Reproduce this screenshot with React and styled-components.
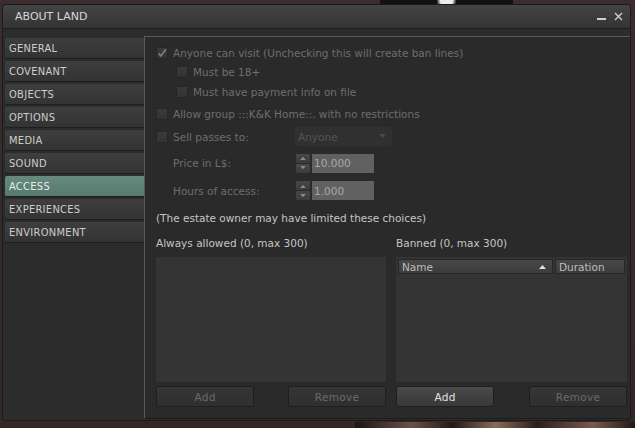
import React from "react";
import styled, { createGlobalStyle } from "styled-components";

const GlobalStyle = createGlobalStyle`
  html, body {
    margin: 0;
    padding: 0;
    background: #3a2c2c;
  }
  body {
    font-family: "DejaVu Sans", "Liberation Sans", sans-serif;
  }
`;

const Desktop = styled.div`
  position: relative;
  width: 635px;
  height: 428px;
  overflow: hidden;
  background: linear-gradient(180deg, #3b2d2d 0%, #332727 100%);
`;

const BackdropPatch = styled.div`
  position: absolute;
  top: 0;
  left: 380px;
  width: 133px;
  height: 5px;
  background: radial-gradient(circle at 50% 10%, #eee 0 6px, #111 10px);
`;

const BackdropFloor = styled.div`
  position: absolute;
  left: 355px;
  bottom: 0;
  width: 280px;
  height: 6px;
  background: linear-gradient(90deg, #1c1414 0%, #6d5048 20%, #231a18 35%, #8a6a5a 50%, #2a1e1a 65%, #7a5a4c 85%, #201816 100%);
`;

const Window = styled.div`
  position: absolute;
  left: 2px;
  top: 4px;
  width: 629px;
  height: 417px;
  display: flex;
  flex-direction: column;
  background: #2c2c2c;
  border: 1px solid #1b1b1b;
  border-radius: 3px;
  box-sizing: border-box;
`;

const TitleBar = styled.div`
  height: 23px;
  display: flex;
  align-items: center;
  padding: 0 7px 0 12px;
  background: linear-gradient(180deg, #444 0%, #343434 100%);
  border-bottom: 1px solid #1c1c1c;
  border-radius: 3px 3px 0 0;
`;

const Title = styled.div`
  flex: 1;
  color: #d8d8d8;
  font-size: 11px;
`;

const TitleButtons = styled.div`
  display: flex;
  align-items: center;
  gap: 8px;
  color: #cfcfcf;
`;

const Body = styled.div`
  flex: 1;
  display: flex;
  padding: 7px 0 0 2px;
  min-height: 0;
`;

const TabColumn = styled.div`
  width: 139px;
  display: flex;
  flex-direction: column;
  gap: 2px;
  padding-top: 2px;
`;

const Tab = styled.div`
  height: 21px;
  display: flex;
  align-items: center;
  padding-left: 4px;
  box-sizing: border-box;
  font-family: "DejaVu Sans Condensed", "DejaVu Sans", sans-serif;
  font-stretch: condensed;
  font-size: 11px;
  letter-spacing: 0.3px;
  color: ${(p) => (p.$active ? "#e4ece8" : "#cdcdcd")};
  background: ${(p) =>
    p.$active
      ? "linear-gradient(180deg, #668a7d 0%, #567a6d 100%)"
      : "linear-gradient(180deg, #3e3e3e 0%, #333333 100%)"};
  border-bottom: 1px solid #1e1e1e;
  border-radius: 2px 0 0 2px;
`;

const Panel = styled.div`
  flex: 1;
  display: flex;
  flex-direction: column;
  background: #2a2a2a;
  border-top: 1px solid #5a5a5a;
  border-left: 1px solid #5a5a5a;
  border-bottom: 1px solid #1c1c1c;
  margin-bottom: 1px;
  padding: 7px 3px 11px 11px;
  box-sizing: border-box;
`;

const Row = styled.div`
  display: flex;
  align-items: center;
  height: ${(p) => p.$h || 20}px;
  margin-top: ${(p) => p.$mt || 0}px;
  padding-left: ${(p) => p.$indent || 0}px;
  font-size: 10.5px;
  color: ${(p) => (p.$bright ? "#c6c6c6" : "#6e6e6e")};
`;

const Check = styled.span`
  width: 12px;
  height: 12px;
  margin-right: 5px;
  flex: none;
  box-sizing: border-box;
  background: linear-gradient(180deg, #3a3a3a 0%, #333 100%);
  border: 1px solid #262626;
  display: flex;
  align-items: center;
  justify-content: center;
`;

const Label = styled.span`
  width: ${(p) => (p.$w ? `${p.$w}px` : "auto")};
  padding-left: ${(p) => p.$pad || 0}px;
  box-sizing: border-box;
  flex: none;
  white-space: nowrap;
`;

const Dropdown = styled.div`
  width: 97px;
  height: 19px;
  display: flex;
  align-items: center;
  justify-content: space-between;
  padding: 0 6px 0 3px;
  box-sizing: border-box;
  background: #303030;
  border-radius: 2px;
  color: #555;
`;

const Spinner = styled.div`
  display: flex;
  align-items: stretch;
  gap: 2px;
  height: 19px;
`;

const SpinButtons = styled.div`
  width: 14px;
  display: flex;
  flex-direction: column;
  gap: 1px;
`;

const SpinButton = styled.div`
  flex: 1;
  background: linear-gradient(180deg, #484848 0%, #3b3b3b 100%);
  border-radius: 1px;
  display: flex;
  align-items: center;
  justify-content: center;
`;

const NumberField = styled.div`
  width: 60px;
  display: flex;
  align-items: center;
  padding-left: 2px;
  background: #616161;
  color: #a8a8a8;
`;

const ListsGrid = styled.div`
  flex: 1;
  display: grid;
  grid-template-columns: 230px 231px;
  column-gap: 10px;
  margin-top: 5px;
  min-height: 0;
`;

const ListColumn = styled.div`
  display: flex;
  flex-direction: column;
  min-height: 0;
`;

const ListTitle = styled.div`
  height: 16px;
  display: flex;
  align-items: center;
  font-size: 10.5px;
  color: #c6c6c6;
  margin-bottom: 6px;
`;

const ListBox = styled.div`
  flex: 1;
  background: #343434;
  padding: 2px 2px;
`;

const HeaderRow = styled.div`
  display: flex;
  gap: 2px;
  height: 15px;
`;

const HeaderCell = styled.div`
  width: ${(p) => p.$w}px;
  display: flex;
  align-items: center;
  justify-content: space-between;
  padding: 0 6px 0 3px;
  box-sizing: border-box;
  background: linear-gradient(180deg, #474747 0%, #3c3c3c 100%);
  border: 1px solid #262626;
  font-size: 10.5px;
  color: #bdbdbd;
`;

const ButtonRow = styled.div`
  display: flex;
  justify-content: space-between;
  padding-top: 4px;
`;

const Button = styled.div`
  width: 98px;
  height: 21px;
  display: flex;
  align-items: center;
  justify-content: center;
  box-sizing: border-box;
  font-size: 10.5px;
  letter-spacing: 0.3px;
  color: ${(p) => (p.$enabled ? "#e2e2e2" : "#6a6a6a")};
  background: ${(p) =>
    p.$enabled
      ? "linear-gradient(180deg, #4a4a4a 0%, #383838 100%)"
      : "linear-gradient(180deg, #363636 0%, #2f2f2f 100%)"};
  border: 1px solid #1e1e1e;
  border-radius: 2px;
`;

const tabs = [
  "GENERAL",
  "COVENANT",
  "OBJECTS",
  "OPTIONS",
  "MEDIA",
  "SOUND",
  "ACCESS",
  "EXPERIENCES",
  "ENVIRONMENT",
];

function Tick() {
  return (
    <svg width="12" height="12" viewBox="0 0 12 12">
      <path d="M2 6.5 L4.8 9.5 L10.5 1.5" fill="none" stroke="#7c7c7c" strokeWidth="2" />
    </svg>
  );
}

function Arrow({ up, color = "#9a9a9a", size = 5 }) {
  return (
    <svg width={size + 2} height={size} viewBox="0 0 7 5">
      <path d={up ? "M0 5 L3.5 1 L7 5 Z" : "M0 0 L3.5 4 L7 0 Z"} fill={color} />
    </svg>
  );
}

function NumberSpinner({ value }) {
  return (
    <Spinner>
      <SpinButtons>
        <SpinButton>
          <Arrow up size={4} color="#8a8a8a" />
        </SpinButton>
        <SpinButton>
          <Arrow size={4} color="#8a8a8a" />
        </SpinButton>
      </SpinButtons>
      <NumberField>{value}</NumberField>
    </Spinner>
  );
}

export default function App() {
  return (
    <Desktop>
      <GlobalStyle />
      <BackdropPatch />
      <BackdropFloor />
      <Window>
        <TitleBar>
          <Title>ABOUT LAND</Title>
          <TitleButtons>
            <svg width="9" height="9" viewBox="0 0 9 9">
              <rect x="0" y="6" width="9" height="2" fill="#cfcfcf" />
            </svg>
            <svg width="9" height="9" viewBox="0 0 9 9">
              <path d="M1 1 L8 8 M8 1 L1 8" stroke="#cfcfcf" strokeWidth="1.4" />
            </svg>
          </TitleButtons>
        </TitleBar>
        <Body>
          <TabColumn>
            {tabs.map((t) => (
              <Tab key={t} $active={t === "ACCESS"}>
                {t}
              </Tab>
            ))}
          </TabColumn>
          <Panel>
            <Row $h={17}>
              <Check>
                <Tick />
              </Check>
              <Label>Anyone can visit (Unchecking this will create ban lines)</Label>
            </Row>
            <Row $h={21} $indent={20}>
              <Check />
              <Label>Must be 18+</Label>
            </Row>
            <Row $h={20} $indent={20}>
              <Check />
              <Label>Must have payment info on file</Label>
            </Row>
            <Row $h={23}>
              <Check />
              <Label>Allow group :::K&amp;K Home::. with no restrictions</Label>
            </Row>
            <Row $h={23}>
              <Check />
              <Label $w={122}>Sell passes to:</Label>
              <Dropdown>
                <span>Anyone</span>
                <Arrow color="#4a4a4a" />
              </Dropdown>
            </Row>
            <Row $h={30}>
              <Label $w={140} $pad={17}>Price in L$:</Label>
              <NumberSpinner value="10.000" />
            </Row>
            <Row $h={25}>
              <Label $w={140} $pad={17}>Hours of access:</Label>
              <NumberSpinner value="1.000" />
            </Row>
            <Row $h={24} $mt={3} $bright>
              <Label>(The estate owner may have limited these choices)</Label>
            </Row>
            <ListsGrid>
              <ListColumn>
                <ListTitle>Always allowed (0, max 300)</ListTitle>
                <ListBox />
                <ButtonRow>
                  <Button>Add</Button>
                  <Button>Remove</Button>
                </ButtonRow>
              </ListColumn>
              <ListColumn>
                <ListTitle>Banned (0, max 300)</ListTitle>
                <ListBox>
                  <HeaderRow>
                    <HeaderCell $w={155}>
                      <span>Name</span>
                      <Arrow up color="#e0e0e0" size={5} />
                    </HeaderCell>
                    <HeaderCell $w={70}>Duration</HeaderCell>
                  </HeaderRow>
                </ListBox>
                <ButtonRow>
                  <Button $enabled>Add</Button>
                  <Button>Remove</Button>
                </ButtonRow>
              </ListColumn>
            </ListsGrid>
          </Panel>
        </Body>
      </Window>
    </Desktop>
  );
}
